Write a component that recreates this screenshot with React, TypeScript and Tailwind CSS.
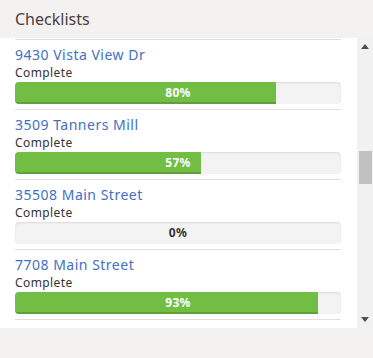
import React from 'react'

interface Checklist {
  address: string
  percent: number
}

const checklists: Checklist[] = [
  { address: '9430 Vista View Dr', percent: 80 },
  { address: '3509 Tanners Mill', percent: 57 },
  { address: '35508 Main Street', percent: 0 },
  { address: '7708 Main Street', percent: 93 },
]

function ProgressBar({ percent }: { percent: number }) {
  return (
    <div className="relative h-[22px] w-full overflow-hidden rounded-[4px] bg-[#f3f3f3] shadow-[inset_0_1px_2px_rgba(0,0,0,0.1)]">
      <div
        className="h-full bg-[#72bd44] shadow-[inset_0_-2px_0_rgba(0,0,0,0.15)]"
        style={{ width: `${percent}%` }}
      />
      <div
        className={`absolute inset-0 flex items-center justify-center text-[12px] font-bold tracking-[0.3px] ${
          percent > 50 ? 'text-white' : 'text-[#333]'
        }`}
      >
        {percent}%
      </div>
    </div>
  )
}

export default function App() {
  return (
    <div
      className="h-[358px] w-[373px] bg-[#f4f2f1]"
      style={{ fontFamily: '"Noto Sans", sans-serif' }}
    >
      <div className="h-[38px] px-[15px] pt-[9px] text-[16px] leading-[20px] text-[#4a4040]">
        Checklists
      </div>
      <div className="flex h-[290px] bg-white">
        <div className="flex-1 overflow-hidden pl-[15px] pr-[16px]">
          <div className="mt-[1px] h-px bg-[#e2dede]" />
          {checklists.map((item, idx) => (
            <div key={idx}>
              <div className="pt-[7px] text-[14px] leading-[16px] tracking-[0.5px] text-[#4170c4]">
                {item.address}
              </div>
              <div className="mt-[2px] text-[12px] leading-[16px] tracking-[0.4px] text-[#333]">
                Complete
              </div>
              <div className="mt-px mb-[5px]">
                <ProgressBar percent={item.percent} />
              </div>
              <div className="h-px bg-[#e2dede]" />
            </div>
          ))}
        </div>
        <div className="flex w-[16px] flex-col items-center bg-[#f1f1f1]">
          <div className="flex h-[17px] w-full items-center justify-center">
            <svg width="8" height="5" viewBox="0 0 8 5">
              <path d="M0 5 L4 0 L8 5 Z" fill="#505050" />
            </svg>
          </div>
          <div className="mt-[96px] h-[33px] w-[13px] bg-[#c1c1c1]" />
          <div className="flex-1" />
          <div className="flex h-[17px] w-full items-center justify-center">
            <svg width="8" height="5" viewBox="0 0 8 5">
              <path d="M0 0 L8 0 L4 5 Z" fill="#505050" />
            </svg>
          </div>
        </div>
      </div>
    </div>
  )
}
